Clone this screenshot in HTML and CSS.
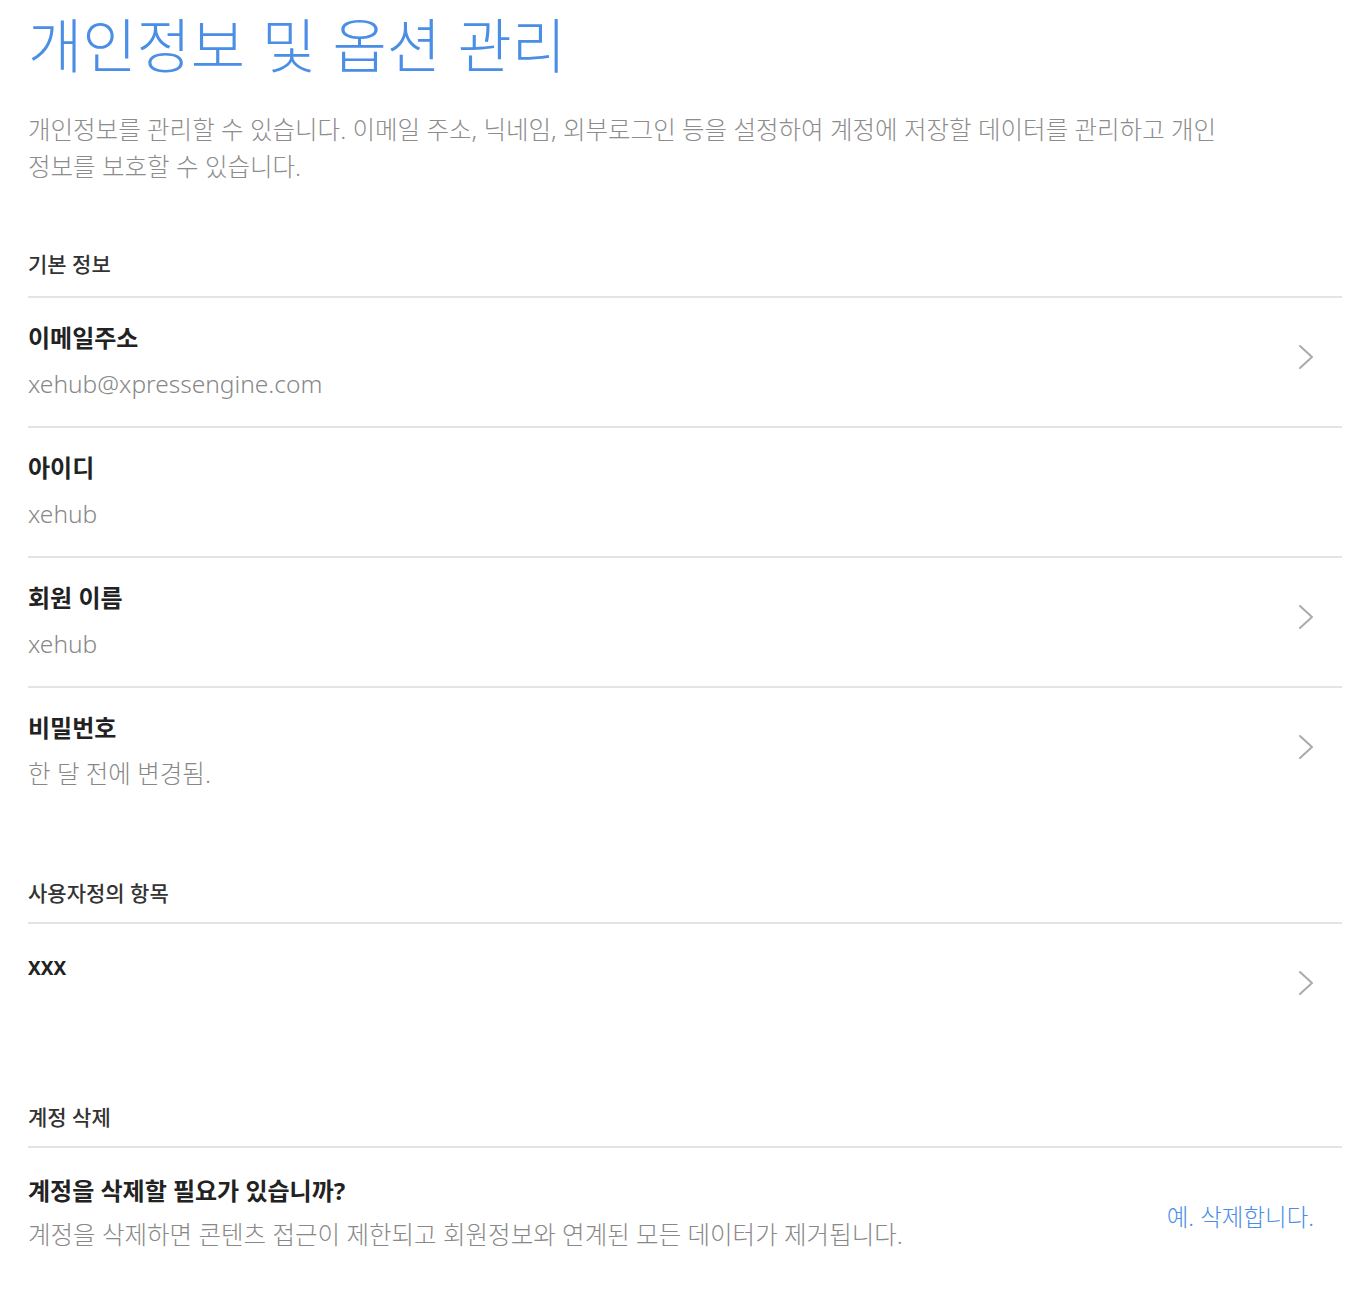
FILE: index.html
```html
<!DOCTYPE html>
<html lang="ko">
<head>
<meta charset="utf-8">
<title>개인정보 및 옵션 관리</title>
<link rel="stylesheet" href="styles.css">
</head>
<body>
<main class="page">
  <h1 class="title">개인정보 및 옵션 관리</h1>
  <p class="intro">개인정보를 관리할 수 있습니다. 이메일 주소, 닉네임, 외부로그인 등을 설정하여 계정에 저장할 데이터를 관리하고 개인 정보를 보호할 수 있습니다.</p>

  <section class="section section-first">
    <h2 class="section-title">기본 정보</h2>
    <ul class="rows">
      <li class="row">
        <div class="row-text">
          <div class="label">이메일주소</div>
          <div class="value">xehub@xpressengine.com</div>
        </div>
        <svg class="chev" viewBox="0 0 16 26" width="16" height="26"><polyline points="2,2 14,13 2,24"/></svg>
      </li>
      <li class="row">
        <div class="row-text">
          <div class="label">아이디</div>
          <div class="value">xehub</div>
        </div>
      </li>
      <li class="row">
        <div class="row-text">
          <div class="label">회원 이름</div>
          <div class="value">xehub</div>
        </div>
        <svg class="chev" viewBox="0 0 16 26" width="16" height="26"><polyline points="2,2 14,13 2,24"/></svg>
      </li>
      <li class="row">
        <div class="row-text">
          <div class="label">비밀번호</div>
          <div class="value">한 달 전에 변경됨.</div>
        </div>
        <svg class="chev" viewBox="0 0 16 26" width="16" height="26"><polyline points="2,2 14,13 2,24"/></svg>
      </li>
    </ul>
  </section>

  <section class="section">
    <h2 class="section-title">사용자정의 항목</h2>
    <ul class="rows">
      <li class="row">
        <div class="row-text">
          <div class="label label-latin">XXX</div>
          <div class="value value-empty"></div>
        </div>
        <svg class="chev" viewBox="0 0 16 26" width="16" height="26"><polyline points="2,2 14,13 2,24"/></svg>
      </li>
    </ul>
  </section>

  <section class="section">
    <h2 class="section-title">계정 삭제</h2>
    <ul class="rows">
      <li class="row row-delete">
        <div class="row-text">
          <div class="label">계정을 삭제할 필요가 있습니까?</div>
          <div class="value">계정을 삭제하면 콘텐츠 접근이 제한되고 회원정보와 연계된 모든 데이터가 제거됩니다.</div>
        </div>
        <a class="delete-link" href="#">예. 삭제합니다.</a>
      </li>
    </ul>
  </section>
</main>
</body>
</html>
```

FILE: styles.css
```css
* { box-sizing: border-box; }

body {
  margin: 0;
  background: #fff;
  font-family: "Noto Sans", "Noto Sans CJK KR", sans-serif;
  color: #222;
}

.page {
  padding: 0 24px 40px 28px;
}

.title {
  margin: 0;
  font-family: "Noto Sans CJK KR", sans-serif;
  font-size: 59px;
  line-height: 86px;
  font-weight: 300;
  color: #4a8ee6;
}

.intro {
  margin: 25px 0 0;
  max-width: 1220px;
  font-size: 24.5px;
  line-height: 37px;
  font-weight: 300;
  color: #8c8c8c;
  word-break: keep-all;
}

.section {
  margin-top: 62px;
}

.section-first {
  margin-top: 64px;
}

.section-title {
  margin: 0;
  padding-bottom: 14px;
  border-bottom: 2px solid #e4e4e4;
  font-size: 21px;
  line-height: 30px;
  font-weight: 500;
  color: #333;
}

.section-first .section-title {
  padding-bottom: 17px;
}

.rows {
  list-style: none;
  margin: 0;
  padding: 0;
}

.row {
  display: flex;
  align-items: flex-start;
  justify-content: space-between;
  padding: 24px 28px 26px 0;
  border-bottom: 2px solid #e4e4e4;
}

.row:last-child {
  border-bottom: none;
}

.label {
  font-size: 24px;
  line-height: 32px;
  font-weight: 700;
  color: #222;
}

.label-latin {
  font-size: 19px;
  padding-top: 4px;
}

.value {
  margin-top: 14px;
  font-size: 24.5px;
  line-height: 32px;
  font-weight: 300;
  color: #888;
}

.value-empty {
  height: 16px;
}

.chev {
  flex: none;
  margin-top: 22px;
  fill: none;
  stroke: #aaa;
  stroke-width: 2;
  stroke-linecap: round;
  stroke-linejoin: round;
}

.row-delete {
  padding-top: 27px;
}

.row-delete .value {
  margin-top: 12px;
}

.delete-link {
  flex: none;
  margin-top: 26px;
  font-size: 23.5px;
  line-height: 32px;
  font-weight: 300;
  color: #4a8ee6;
  text-decoration: none;
}
```
